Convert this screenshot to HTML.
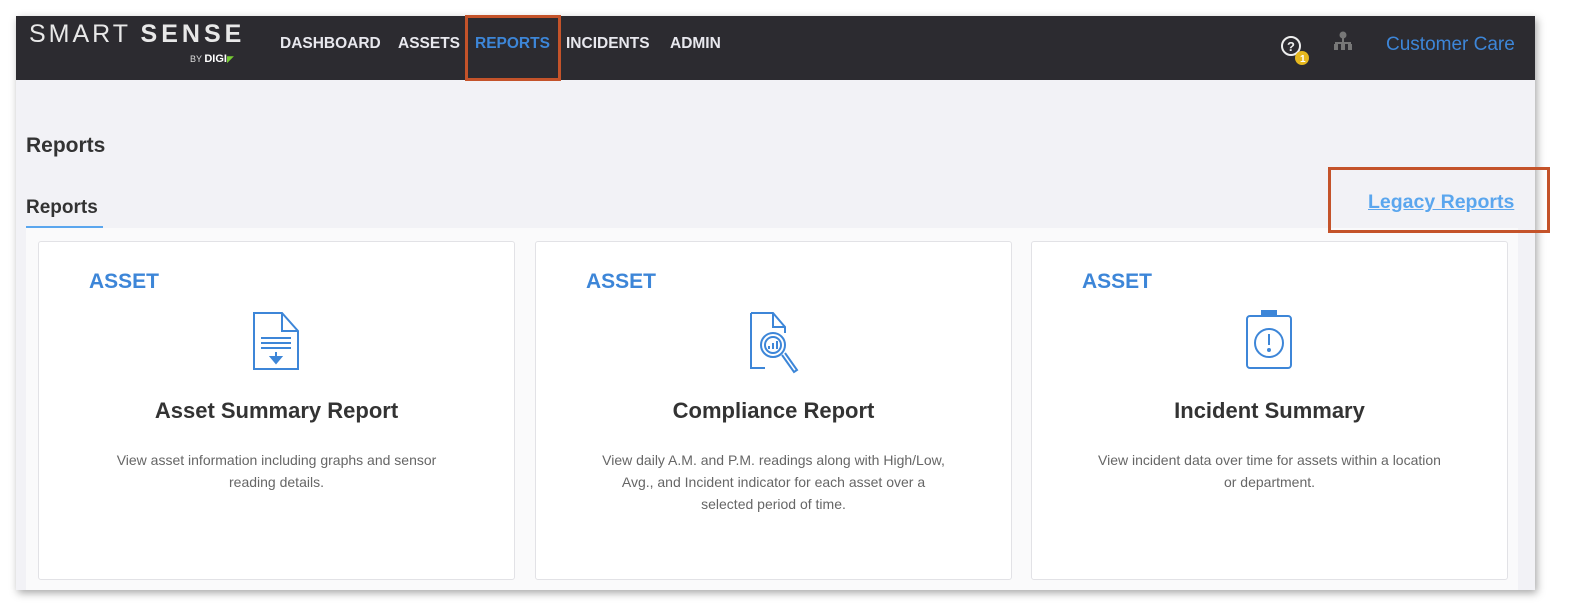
<!DOCTYPE html>
<html><head><style>
body{margin:0;width:1573px;height:612px;background:#fff;position:relative;overflow:hidden;font-family:"Liberation Sans",sans-serif}
.frame{position:absolute;left:16px;top:16px;width:1519px;height:574px;background:#f2f2f6;box-shadow:2px 3px 8px rgba(0,0,0,.35)}
.nav{position:absolute;left:0;top:0;width:1519px;height:64px;background:#2c2b30}
.logo{position:absolute;left:13px;top:4px;color:#e8e8e8;font-size:25px;letter-spacing:3px}
.logo b{letter-spacing:4px}
.by{position:absolute;left:174px;top:37px;color:#ddd;font-size:9px}
.by b{font-size:11px;color:#fff}
.mi{position:absolute;top:19px;color:#e8e8ee;font-size:15.5px;font-weight:bold;white-space:nowrap}
.box{position:absolute;border:3px solid #c4532a}
.cc{position:absolute;left:1370px;top:18px;color:#3d86d8;font-size:19px}
.panel{position:absolute;left:10px;top:212px;width:1492px;height:362px;background:#fafafb}
.card{position:absolute;top:225px;width:475px;height:337px;background:#fff;border:1px solid #e2e2e6;border-radius:3px;text-align:center}
.card .t{position:absolute;left:50px;top:28px;color:#3d86d8;font-weight:bold;font-size:21px}
.card h2{position:absolute;top:156px;width:100%;margin:0;font-size:22px;color:#333}
.card p{position:absolute;top:207px;left:62px;right:62px;margin:0;font-size:14px;line-height:22px;color:#666}
</style></head><body>
<div class="frame">
<div class="nav">
<div class="logo">SMART <b>SENSE</b></div>
<div class="by">BY <b>DIGI</b><span style="color:#7c3">◤</span></div>
<div class="mi" style="left:264px">DASHBOARD</div>
<div class="mi" style="left:382px">ASSETS</div>
<div class="mi" style="left:459px;color:#3d86d8">REPORTS</div>
<div class="mi" style="left:550px">INCIDENTS</div>
<div class="mi" style="left:654px">ADMIN</div>
<svg style="position:absolute;left:1263px;top:18px" width="40" height="36"><circle cx="12" cy="12" r="9" fill="none" stroke="#eee" stroke-width="2"/><text x="8" y="17" fill="#eee" font-size="13" font-weight="bold" font-family="Liberation Sans">?</text><circle cx="23" cy="24" r="7" fill="#e6b81e"/><text x="21" y="28" fill="#fff" font-size="10" font-weight="bold" font-family="Liberation Sans">1</text></svg>
<svg style="position:absolute;left:1316px;top:15px" width="22" height="24" fill="#777"><circle cx="11" cy="4" r="3.5"/><rect x="10" y="7" width="2" height="6"/><rect x="3" y="11" width="16" height="2"/><rect x="2" y="13" width="4" height="6"/><rect x="9" y="13" width="4" height="6"/><rect x="16" y="13" width="4" height="6"/></svg>
<div class="cc">Customer Care</div>
</div>
<div style="position:absolute;left:10px;top:118px;font-size:21px;font-weight:bold;color:#333">Reports</div>
<div style="position:absolute;left:10px;top:181px;font-size:19px;font-weight:bold;color:#333">Reports</div>
<div style="position:absolute;left:10px;top:210px;width:77px;height:2px;background:#5aa6ee"></div>
<div style="position:absolute;left:1352px;top:175px;font-size:19.5px;font-weight:bold;color:#5aa6ee;text-decoration:underline">Legacy Reports</div>
<div class="panel"></div>
<div class="card" style="left:22px"><div class="t">ASSET</div>
<svg style="position:absolute;left:212px;top:68px" width="52" height="62" fill="none" stroke="#3d86d8" stroke-width="2"><path d="M3 3h28l16 18v38H3z"/><path d="M31 3v18h16"/><path d="M10 28h30M10 33h30M10 38h30" /><path d="M25 42v10"/><path d="M20 47l5 6 5-6z" fill="#3d86d8"/></svg>
<h2>Asset Summary Report</h2><p>View asset information including graphs and sensor reading details.</p></div>
<div class="card" style="left:519px"><div class="t">ASSET</div>
<svg style="position:absolute;left:212px;top:68px" width="60" height="70" fill="none" stroke="#3d86d8" stroke-width="2"><path d="M3 3h22l12 14v6M3 3v55h14"/><path d="M25 3v14h12"/><circle cx="25" cy="35" r="12"/><circle cx="25" cy="35" r="8"/><path d="M21 39v-3M25 39v-6M29 39v-8"/><path d="M34 45l12 17 3-2-12-17"/></svg>
<h2>Compliance Report</h2><p>View daily A.M. and P.M. readings along with High/Low, Avg., and Incident indicator for each asset over a selected period of time.</p></div>
<div class="card" style="left:1015px"><div class="t">ASSET</div>
<svg style="position:absolute;left:212px;top:66px" width="52" height="64" fill="none" stroke="#3d86d8" stroke-width="2"><rect x="3" y="8" width="44" height="52" rx="3"/><rect x="18" y="3" width="14" height="5" fill="#3d86d8"/><circle cx="25" cy="35" r="14"/><path d="M25 26v11"/><circle cx="25" cy="42" r="1" fill="#3d86d8"/></svg>
<h2>Incident Summary</h2><p>View incident data over time for assets within a location or department.</p></div>
</div>
<div class="box" style="left:465px;top:15px;width:90px;height:60px"></div>
<div class="box" style="left:1328px;top:167px;width:216px;height:60px"></div>
</body></html>
